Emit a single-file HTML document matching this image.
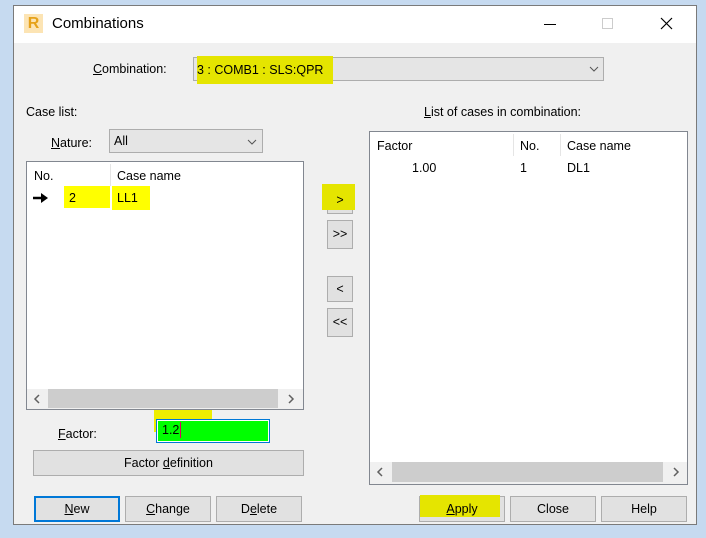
<!DOCTYPE html>
<html><head><style>
body{margin:0;width:706px;height:538px;background:#c6daf0;position:relative;overflow:hidden;font-family:"Liberation Sans",sans-serif;font-size:12.5px;color:#000}
.a{position:absolute}
.win{left:13px;top:5px;width:684px;height:520px;background:#f0f0f0;border:1px solid #7a7a7a;box-sizing:border-box}
.btn{position:absolute;background:#e1e1e1;border:1px solid #adadad;box-sizing:border-box;text-align:center}
.list{position:absolute;background:#fff;border:1px solid #828790;box-sizing:border-box}
.hl{position:absolute;background:#ffff00}
u{text-decoration:underline}
</style></head><body>
<div class="a win"></div>
<div class="a" style="left:14px;top:6px;width:682px;height:37px;background:#fff"></div>
<div class="a" style="left:24px;top:14px;width:19px;height:19px;background:#fce4b4;color:#e6a21a;font-weight:bold;font-size:16px;line-height:19px;text-align:center">R</div>
<div class="a" style="left:52px;top:15px;font-size:15px">Combinations</div>
<div class="a" style="left:544px;top:24px;width:12px;height:1px;background:#000"></div>
<div class="a" style="left:602px;top:18px;width:11px;height:11px;border:1px solid #ccc;box-sizing:border-box"></div>
<svg class="a" style="left:660px;top:17px" width="13" height="13"><path d="M1 1L12 12M12 1L1 12" stroke="#000" stroke-width="1.2"/></svg>

<div class="a" style="left:93px;top:62px"><u>C</u>ombination:</div>
<div class="btn" style="left:193px;top:57px;width:411px;height:24px;background:#e5e5e5"></div>
<div class="hl" style="left:197px;top:56px;width:136px;height:28px;background:#e5e500"></div>
<div class="a" style="left:197px;top:63px">3 : COMB1 : SLS:QPR</div>
<svg class="a" style="left:589px;top:66px" width="10" height="6"><path d="M1 1L5 5L9 1" stroke="#555" fill="none"/></svg>

<div class="a" style="left:26px;top:105px">Case list:</div>
<div class="a" style="left:424px;top:105px"><u>L</u>ist of cases in combination:</div>
<div class="a" style="left:51px;top:136px"><u>N</u>ature:</div>
<div class="btn" style="left:109px;top:129px;width:154px;height:24px;background:#e5e5e5;text-align:left;padding:4px 4px">All</div>
<svg class="a" style="left:247px;top:139px" width="10" height="6"><path d="M1 1L5 5L9 1" stroke="#555" fill="none"/></svg>

<div class="list" style="left:26px;top:161px;width:278px;height:249px"></div>
<div class="a" style="left:110px;top:164px;width:1px;height:22px;background:#e5e5e5"></div>
<div class="a" style="left:34px;top:169px">No.</div>
<div class="a" style="left:117px;top:169px">Case name</div>
<svg class="a" style="left:33px;top:192px" width="16" height="12"><path d="M0 6H10" stroke="#000" stroke-width="2.5"/><path d="M8 1L15 6L8 11Z" fill="#000"/></svg>
<div class="hl" style="left:64px;top:186px;width:46px;height:22px"></div>
<div class="hl" style="left:112px;top:186px;width:38px;height:24px"></div>
<div class="a" style="left:69px;top:191px">2</div>
<div class="a" style="left:117px;top:191px">LL1</div>
<div class="a" style="left:27px;top:389px;width:276px;height:20px;background:#f0f0f0"></div>
<div class="a" style="left:48px;top:389px;width:230px;height:19px;background:#cdcdcd"></div>
<svg class="a" style="left:33px;top:394px" width="8" height="10"><path d="M6 1L2 5L6 9" stroke="#606060" stroke-width="1.5" fill="none"/></svg>
<svg class="a" style="left:287px;top:394px" width="8" height="10"><path d="M2 1L6 5L2 9" stroke="#606060" stroke-width="1.5" fill="none"/></svg>

<div class="hl" style="left:154px;top:410px;width:58px;height:22px;background:#eeee00"></div>
<div class="a" style="left:58px;top:427px"><u>F</u>actor:</div>
<div class="a" style="left:156px;top:419px;width:114px;height:24px;border:1px solid #0078d7;box-sizing:border-box;background:#fff"></div>
<div class="a" style="left:158px;top:421px;width:110px;height:20px;background:#00ff00"></div>
<div class="a" style="left:162px;top:423px">1.2</div>
<div class="a" style="left:180px;top:422px;width:1px;height:16px;background:#e00060"></div>
<div class="btn" style="left:33px;top:450px;width:271px;height:26px;line-height:24px">Factor <u>d</u>efinition</div>

<div class="btn" style="left:34px;top:496px;width:86px;height:26px;line-height:22px;border:2px solid #0078d7"><u>N</u>ew</div>
<div class="btn" style="left:125px;top:496px;width:86px;height:26px;line-height:24px"><u>C</u>hange</div>
<div class="btn" style="left:216px;top:496px;width:86px;height:26px;line-height:24px">D<u>e</u>lete</div>
<div class="btn" style="left:419px;top:496px;width:86px;height:26px"></div>
<div class="hl" style="left:420px;top:495px;width:80px;height:22px;background:#e5e500"></div>
<div class="a" style="left:419px;top:502px;width:86px;text-align:center"><u>A</u>pply</div>
<div class="btn" style="left:510px;top:496px;width:86px;height:26px;line-height:24px">Close</div>
<div class="btn" style="left:601px;top:496px;width:86px;height:26px;line-height:24px">Help</div>

<div class="btn" style="left:327px;top:188px;width:26px;height:26px"></div>
<div class="hl" style="left:322px;top:184px;width:33px;height:26px;background:#e5e500"></div>
<div class="a" style="left:327px;top:193px;width:26px;text-align:center">&gt;</div>
<div class="btn" style="left:327px;top:220px;width:26px;height:29px;line-height:27px">&gt;&gt;</div>
<div class="btn" style="left:327px;top:276px;width:26px;height:26px;line-height:24px">&lt;</div>
<div class="btn" style="left:327px;top:308px;width:26px;height:29px;line-height:27px">&lt;&lt;</div>

<div class="list" style="left:369px;top:131px;width:319px;height:354px"></div>
<div class="a" style="left:513px;top:134px;width:1px;height:22px;background:#e5e5e5"></div>
<div class="a" style="left:560px;top:134px;width:1px;height:22px;background:#e5e5e5"></div>
<div class="a" style="left:377px;top:139px">Factor</div>
<div class="a" style="left:520px;top:139px">No.</div>
<div class="a" style="left:567px;top:139px">Case name</div>
<div class="a" style="left:412px;top:161px">1.00</div>
<div class="a" style="left:520px;top:161px">1</div>
<div class="a" style="left:567px;top:161px">DL1</div>
<div class="a" style="left:370px;top:462px;width:317px;height:22px;background:#f0f0f0"></div>
<div class="a" style="left:392px;top:462px;width:271px;height:20px;background:#cdcdcd"></div>
<svg class="a" style="left:376px;top:467px" width="8" height="10"><path d="M6 1L2 5L6 9" stroke="#606060" stroke-width="1.5" fill="none"/></svg>
<svg class="a" style="left:672px;top:467px" width="8" height="10"><path d="M2 1L6 5L2 9" stroke="#606060" stroke-width="1.5" fill="none"/></svg>
</body></html>
